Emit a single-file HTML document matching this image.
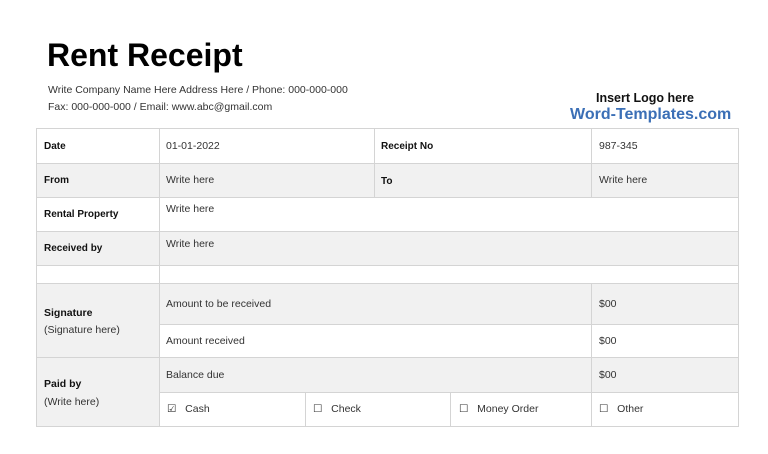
<!DOCTYPE html>
<html><head><meta charset="utf-8"><style>
body{margin:0;width:768px;height:454px;background:#fff;position:relative;overflow:hidden;font-family:"Liberation Sans",sans-serif;color:#222}
.a{position:absolute;white-space:nowrap}
.c{position:absolute;box-sizing:border-box;border-right:1px solid #d4d4d4;border-bottom:1px solid #d4d4d4}
.g{background:#f1f1f1}
.t{position:absolute;font-size:10.5px;white-space:nowrap;color:#333}
.b{font-weight:bold;color:#111;font-size:10px}
</style></head><body>
<div class="a" style="left:47px;top:37px;font-size:32px;font-weight:bold;color:#000;letter-spacing:0px">Rent Receipt</div>
<div class="a" style="left:48px;top:84px;font-size:10.5px;color:#333">Write Company Name Here Address Here / Phone: 000-000-000</div>
<div class="a" style="left:48px;top:101px;font-size:10.5px;color:#333">Fax: 000-000-000 / Email: www.abc@gmail.com</div>
<div class="a" style="left:596px;top:91px;font-size:12.5px;font-weight:bold;color:#111">Insert Logo here</div>
<div class="a" style="left:570px;top:106px;font-size:16px;font-weight:bold;color:#3b6fb6">Word-Templates.com</div>

<div style="position:absolute;left:36px;top:128px;width:703px;height:299px;border-left:1px solid #d4d4d4;border-top:1px solid #d4d4d4;box-sizing:border-box"></div>
<div class="c" style="left:36px;top:129px;width:124px;height:35px"></div>
<div class="c" style="left:160px;top:129px;width:215px;height:35px"></div>
<div class="c" style="left:375px;top:129px;width:217px;height:35px"></div>
<div class="c" style="left:592px;top:129px;width:147px;height:35px"></div>
<div class="c g" style="left:36px;top:164px;width:124px;height:34px;border-left:1px solid #d4d4d4"></div>
<div class="c g" style="left:160px;top:164px;width:215px;height:34px"></div>
<div class="c g" style="left:375px;top:164px;width:217px;height:34px"></div>
<div class="c g" style="left:592px;top:164px;width:147px;height:34px"></div>
<div class="c" style="left:36px;top:198px;width:124px;height:34px"></div>
<div class="c" style="left:160px;top:198px;width:579px;height:34px"></div>
<div class="c g" style="left:36px;top:232px;width:124px;height:34px;border-left:1px solid #d4d4d4"></div>
<div class="c g" style="left:160px;top:232px;width:579px;height:34px"></div>
<div class="c" style="left:36px;top:266px;width:124px;height:18px"></div>
<div class="c" style="left:160px;top:266px;width:579px;height:18px"></div>
<div class="c g" style="left:36px;top:284px;width:124px;height:74px;border-left:1px solid #d4d4d4"></div>
<div class="c g" style="left:160px;top:284px;width:432px;height:41px"></div>
<div class="c g" style="left:592px;top:284px;width:147px;height:41px"></div>
<div class="c" style="left:160px;top:325px;width:432px;height:33px"></div>
<div class="c" style="left:592px;top:325px;width:147px;height:33px"></div>
<div class="c g" style="left:36px;top:358px;width:124px;height:69px;border-left:1px solid #d4d4d4"></div>
<div class="c g" style="left:160px;top:358px;width:432px;height:35px"></div>
<div class="c g" style="left:592px;top:358px;width:147px;height:35px"></div>
<div class="c" style="left:160px;top:393px;width:146px;height:34px"></div>
<div class="c" style="left:306px;top:393px;width:145px;height:34px"></div>
<div class="c" style="left:451px;top:393px;width:141px;height:34px"></div>
<div class="c" style="left:592px;top:393px;width:147px;height:34px"></div>

<div class="t b" style="left:44px;top:141px">Date</div>
<div class="t" style="left:166px;top:140px">01-01-2022</div>
<div class="t b" style="left:381px;top:141px">Receipt No</div>
<div class="t" style="left:599px;top:140px">987-345</div>
<div class="t b" style="left:44px;top:175px">From</div>
<div class="t" style="left:166px;top:174px">Write here</div>
<div class="t b" style="left:381px;top:176px">To</div>
<div class="t" style="left:599px;top:174px">Write here</div>
<div class="t b" style="left:44px;top:209px">Rental Property</div>
<div class="t" style="left:166px;top:203px">Write here</div>
<div class="t b" style="left:44px;top:243px">Received by</div>
<div class="t" style="left:166px;top:238px">Write here</div>
<div class="t b" style="left:44px;top:307px;font-size:10.5px">Signature</div>
<div class="t" style="left:44px;top:324px">(Signature here)</div>
<div class="t" style="left:166px;top:298px">Amount to be received</div>
<div class="t" style="left:599px;top:298px">$00</div>
<div class="t" style="left:166px;top:335px">Amount received</div>
<div class="t" style="left:599px;top:335px">$00</div>
<div class="t b" style="left:44px;top:378px;font-size:10.5px">Paid by</div>
<div class="t" style="left:44px;top:396px">(Write here)</div>
<div class="t" style="left:166px;top:369px">Balance due</div>
<div class="t" style="left:599px;top:369px">$00</div>
<div class="t" style="left:167px;top:403px">☑&nbsp;&nbsp; Cash</div>
<div class="t" style="left:313px;top:403px">☐&nbsp;&nbsp; Check</div>
<div class="t" style="left:459px;top:403px">☐&nbsp;&nbsp; Money Order</div>
<div class="t" style="left:599px;top:403px">☐&nbsp;&nbsp; Other</div>
</body></html>
